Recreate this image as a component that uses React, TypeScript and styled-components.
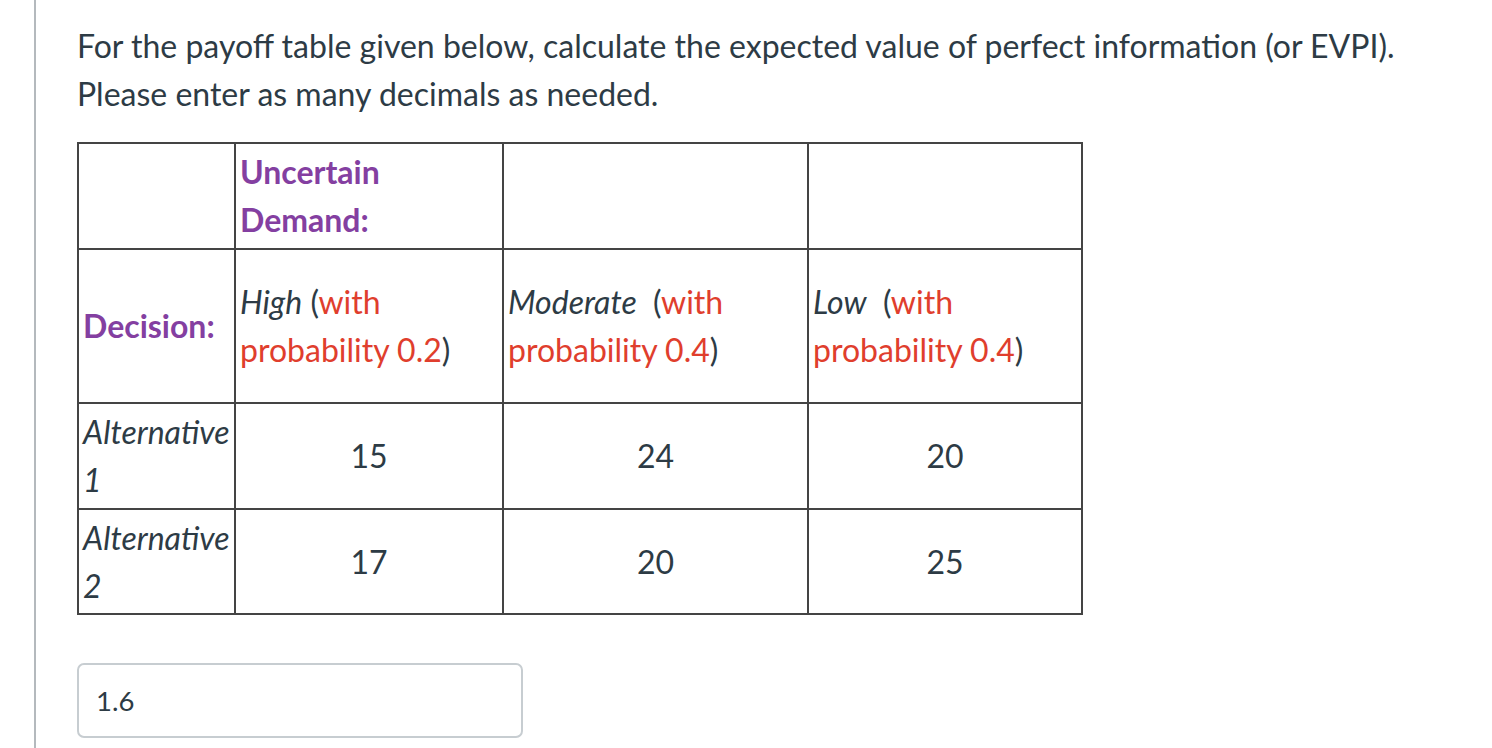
import React from "react";
import styled, { createGlobalStyle } from "styled-components";

const Global = createGlobalStyle`
  html, body { margin: 0; padding: 0; background: #fff; }
  body { font-family: Lato, "Open Sans", sans-serif; color: #2d3b45; }
`;

const Page = styled.div`
  margin-left: 34px;
  border-left: 2px solid #b4b9bd;
  min-height: 748px;
  box-sizing: border-box;
  padding: 22px 0 0 41px;
`;

const Prompt = styled.p`
  margin: 0 0 24px;
  font-size: 32px;
  line-height: 48px;
`;

const Table = styled.table`
  border-collapse: collapse;
  table-layout: fixed;
  width: 1004px;
  font-size: 32px;
  line-height: 48px;
  border: 2px solid #444;
`;

const Row = styled.tr<{ $h: number }>`
  height: ${(p) => p.$h}px;
`;

const Cell = styled.td<{ $center?: boolean }>`
  border: 2px solid #444;
  padding: 0 4px;
  vertical-align: middle;
  text-align: ${(p) => (p.$center ? "center" : "left")};
  overflow: visible;
`;

const Purple = styled.strong`
  color: #843fa1;
  font-weight: 700;
`;

const Red = styled.span`
  color: #e03e2d;
`;

const Em = styled.em`
  font-style: italic;
`;

const Answer = styled.div`
  margin-top: 48px;
  width: 446px;
  height: 75px;
  box-sizing: border-box;
  border: 2px solid #c7cdd1;
  border-radius: 7px;
  display: flex;
  align-items: center;
  padding-left: 17px;
  font-size: 27.5px;
  color: #2d3b45;
`;

const Outcome = ({ name, p, gap }: { name: string; p: string; gap?: boolean }) => (
  <>
    <Em>{name}</Em>
    {gap ? "\u00a0 (" : " ("}
    <Red>with probability {p}</Red>)
  </>
);

export default function App() {
  return (
    <>
      <Global />
      <Page>
        <Prompt>
          For the payoff table given below, calculate the expected value of perfect information (or EVPI).
          <br />
          Please enter as many decimals as needed.
        </Prompt>
        <Table>
          <colgroup>
            <col style={{ width: 157 }} />
            <col style={{ width: 268 }} />
            <col style={{ width: 305 }} />
            <col style={{ width: 274 }} />
          </colgroup>
          <tbody>
            <Row $h={106}>
              <Cell />
              <Cell>
                <Purple>Uncertain Demand:</Purple>
              </Cell>
              <Cell />
              <Cell />
            </Row>
            <Row $h={154}>
              <Cell>
                <Purple>Decision:</Purple>
              </Cell>
              <Cell>
                <Outcome name="High" p="0.2" />
              </Cell>
              <Cell>
                <Outcome name="Moderate" p="0.4" gap />
              </Cell>
              <Cell>
                <Outcome name="Low" p="0.4" gap />
              </Cell>
            </Row>
            <Row $h={106}>
              <Cell>
                <Em>Alternative 1</Em>
              </Cell>
              <Cell $center>15</Cell>
              <Cell $center>24</Cell>
              <Cell $center>20</Cell>
            </Row>
            <Row $h={105}>
              <Cell>
                <Em>Alternative 2</Em>
              </Cell>
              <Cell $center>17</Cell>
              <Cell $center>20</Cell>
              <Cell $center>25</Cell>
            </Row>
          </tbody>
        </Table>
        <Answer>1.6</Answer>
      </Page>
    </>
  );
}
